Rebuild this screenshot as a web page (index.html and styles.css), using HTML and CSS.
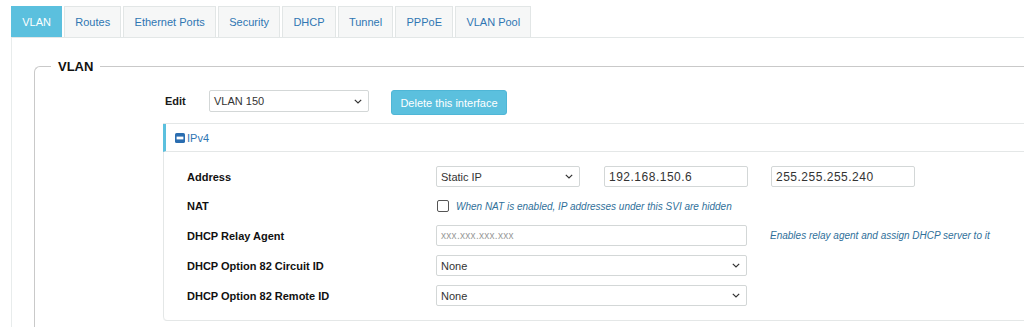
FILE: index.html
```html
<!DOCTYPE html>
<html>
<head>
<meta charset="utf-8">
<link rel="stylesheet" href="styles.css">
</head>
<body>
<div class="page">
  <ul class="tabs">
    <li class="tab active">VLAN</li>
    <li class="tab">Routes</li>
    <li class="tab">Ethernet Ports</li>
    <li class="tab">Security</li>
    <li class="tab">DHCP</li>
    <li class="tab">Tunnel</li>
    <li class="tab">PPPoE</li>
    <li class="tab">VLAN Pool</li>
  </ul>
  <div class="tab-content">
    <fieldset class="group">
      <legend class="group-title">VLAN</legend>
      <div class="edit-row">
        <span class="edit-label">Edit</span>
        <span class="select edit-select"><span class="select-text">VLAN 150</span><svg class="chev" width="8" height="5" viewBox="0 0 8 5"><polyline points="0.8,0.8 4,4 7.2,0.8" fill="none" stroke="#333" stroke-width="1.2"/></svg></span>
        <button class="btn-info">Delete this interface</button>
      </div>
      <div class="panel">
        <div class="panel-heading">
          <svg class="minus-icon" width="10" height="10" viewBox="0 0 10 10"><rect x="0" y="0" width="10" height="10" rx="1.6" fill="#2a6db0"/><rect x="1.6" y="3.6" width="6.8" height="2.8" fill="#fff"/></svg>
          <span class="panel-title">IPv4</span>
        </div>
        <div class="panel-body">
          <div class="row">
            <span class="label">Address</span>
            <span class="select w144"><span class="select-text">Static IP</span><svg class="chev" width="8" height="5" viewBox="0 0 8 5"><polyline points="0.8,0.8 4,4 7.2,0.8" fill="none" stroke="#333" stroke-width="1.2"/></svg></span>
            <span class="input w144 ml24">192.168.150.6</span>
            <span class="input w144 ml23">255.255.255.240</span>
          </div>
          <div class="row row-nat">
            <span class="label">NAT</span>
            <span class="checkbox"></span>
            <span class="help">When NAT is enabled, IP addresses under this SVI are hidden</span>
          </div>
          <div class="row">
            <span class="label">DHCP Relay Agent</span>
            <span class="input w311 placeholder">xxx.xxx.xxx.xxx</span>
            <span class="help ml23">Enables relay agent and assign DHCP server to it</span>
          </div>
          <div class="row">
            <span class="label">DHCP Option 82 Circuit ID</span>
            <span class="select w311"><span class="select-text">None</span><svg class="chev" width="8" height="5" viewBox="0 0 8 5"><polyline points="0.8,0.8 4,4 7.2,0.8" fill="none" stroke="#333" stroke-width="1.2"/></svg></span>
          </div>
          <div class="row last">
            <span class="label">DHCP Option 82 Remote ID</span>
            <span class="select w311"><span class="select-text">None</span><svg class="chev" width="8" height="5" viewBox="0 0 8 5"><polyline points="0.8,0.8 4,4 7.2,0.8" fill="none" stroke="#333" stroke-width="1.2"/></svg></span>
          </div>
        </div>
      </div>
    </fieldset>
  </div>
</div>
</body>
</html>
```
FILE: styles.css
```css
html, body {
  margin: 0;
  padding: 0;
  background: #fff;
  overflow: hidden;
  font-family: "Liberation Sans", Arial, sans-serif;
  font-size: 11px;
  color: #1a1a1a;
}
.page {
  padding: 6px 0 0 11px;
}
.tabs {
  list-style: none;
  margin: 0;
  padding: 0;
  display: flex;
  gap: 2px;
}
.tab {
  height: 30px;
  line-height: 30px;
  padding: 0 10.2px;
  border: 1px solid #e2e6e6;
  border-bottom: none;
  background: #f6f7f7;
  color: #2f76b3;
  font-size: 11px;
}
.tab.active {
  background: #5bc0de;
  border-color: #5bc0de;
  color: #fff;
}
.tab-content {
  border-top: 1px solid #e3e7e7;
  border-left: 1px solid #e8ecec;
  margin-right: -60px;
  padding-top: 21px;
}
.group {
  margin: 0 0 0 22px;
  padding: 0 0 40px 0;
  border: 1px solid #c9c9c9;
  border-right: none;
  border-radius: 6px 0 0 0;
}
.group-title {
  margin-left: 16px;
  padding: 0 7px;
  font-size: 13px;
  font-weight: bold;
  color: #111;
  line-height: 15px;
}
.edit-row {
  display: flex;
  align-items: flex-start;
  margin: 16px 0 0 130px;
}
.edit-label {
  width: 44px;
  font-weight: bold;
  line-height: 22px;
}
.select {
  display: flex;
  align-items: center;
  box-sizing: border-box;
  height: 21px;
  border: 1px solid #d3d7d7;
  border-radius: 2px;
  padding: 0 6px 0 4px;
  background: #fff;
  color: #333;
  font-size: 11px;
}
.select-text {
  flex: 1;
}
.chev {
  display: block;
}
.edit-select {
  width: 160px;
  height: 22px;
}
.btn-info {
  margin-left: 22px;
  width: 116px;
  height: 25px;
  padding: 0;
  border: 1px solid #4fb6d6;
  border-radius: 3px;
  background: #5bc0de;
  color: #fff;
  font-family: "Liberation Sans", Arial, sans-serif;
  font-size: 11px;
}
.panel {
  margin: 8px 0 0 128px;
  border: 1px solid #e4e7e7;
  border-left: none;
  border-radius: 0 0 0 4px;
}
.panel-heading {
  display: flex;
  align-items: center;
  height: 27px;
  border-left: 3px solid #5bc0de;
  border-bottom: 1px solid #e4e7e7;
  padding-left: 9px;
}
.minus-icon {
  display: block;
  margin-right: 2px;
}
.panel-title {
  color: #2f76b3;
  font-size: 11px;
}
.panel-body {
  border-left: 1px solid #e4e7e7;
  border-radius: 0 0 0 4px;
  padding: 14px 0 14px 23px;
}
.row {
  display: flex;
  align-items: center;
  height: 21px;
  margin-bottom: 9px;
}
.row.row-nat {
  height: 20px;
}
.row.last {
  margin-bottom: 0;
}
.label {
  width: 249px;
  flex: none;
  font-weight: bold;
  color: #111;
}
.input {
  display: flex;
  align-items: center;
  box-sizing: border-box;
  height: 21px;
  border: 1px solid #d3d7d7;
  border-radius: 2px;
  padding: 0 4px;
  color: #333;
  font-size: 12px;
  letter-spacing: 0.5px;
}
.input.placeholder {
  color: #9a9a9a;
  font-size: 10px;
  letter-spacing: 0.3px;
}
.w144 { width: 144px; }
.w311 { width: 311px; }
.ml24 { margin-left: 24px; }
.ml23 { margin-left: 23px; }
.checkbox {
  box-sizing: border-box;
  width: 12px;
  height: 12px;
  margin-left: 1px;
  border: 1.5px solid #555;
  border-radius: 2px;
  background: #fff;
}
.help {
  font-style: italic;
  color: #30709a;
  font-size: 10px;
}
.row-nat .help {
  margin-left: 7px;
}
```
